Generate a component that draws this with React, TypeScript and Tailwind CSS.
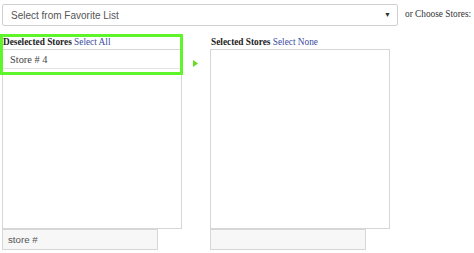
import React from 'react';

const serif = { fontFamily: '"Liberation Serif", "Times New Roman", serif' };
const sans = { fontFamily: '"Liberation Sans", Arial, sans-serif' };

const StoreColumn: React.FC<{ title: string; action: string; items: string[]; placeholder?: string }> = ({
  title,
  action,
  items,
  placeholder,
}) => (
  <div className="flex flex-col w-[180px] shrink-0">
    <div className="h-[15px] pl-[1px] pt-[3px] text-[9.3px] leading-[11px] text-[#222] whitespace-nowrap" style={serif}>
      <span className="font-bold">{title}</span> <span className="text-[#3a4ca0]">{action}</span>
    </div>
    <div className="h-[180px] w-[180px] border border-[#d6d6d6] bg-white">
      {items.map((it) => (
        <div
          key={it}
          className="h-[19px] border-b border-[#e4e4e4] pl-[7px] pt-[3px] text-[10.4px] leading-[13px] text-[#444]"
          style={serif}
        >
          {it}
        </div>
      ))}
    </div>
    <input
      className="h-[21px] w-[156px] border border-[#d6d6d6] bg-[#f7f7f7] px-[5px] text-[9.7px] text-[#555] outline-none placeholder:text-[#555]"
      style={sans}
      placeholder={placeholder}
    />
  </div>
);

export default function App() {
  return (
    <div className="relative w-[474px] h-[253px] bg-white overflow-hidden">
      <div className="flex items-center pt-[4px] pl-[2px]">
        <div
          className="flex shrink-0 items-center justify-between h-[22px] w-[396px] border border-[#d0d0d0] rounded-[2px] pl-[8px] pr-[6px] text-[10px] text-[#555]"
          style={sans}
        >
          <span>Select from Favorite List</span>
          <span className="text-[7px] text-[#333]">▼</span>
        </div>
        <span className="ml-[7px] whitespace-nowrap text-[9.3px] text-[#333]" style={serif}>
          or Choose Stores:
        </span>
      </div>

      <div className="flex pt-[8px] pl-[2px]">
        <StoreColumn title="Deselected Stores" action="Select All" items={['Store # 4']} placeholder="store #" />
        <div className="w-[28px] shrink-0 pt-[26px] pl-[11px]">
          <svg width="5" height="7" viewBox="0 0 5 7" className="block">
            <path d="M0 0 L5 3.5 L0 7 Z" fill="#66dd22" />
          </svg>
        </div>
        <StoreColumn title="Selected Stores" action="Select None" items={[]} />
      </div>

      <div className="absolute left-0 top-[34px] w-[183px] h-[41px] border-[3px] border-[#5ef52a] pointer-events-none" />
    </div>
  );
}
